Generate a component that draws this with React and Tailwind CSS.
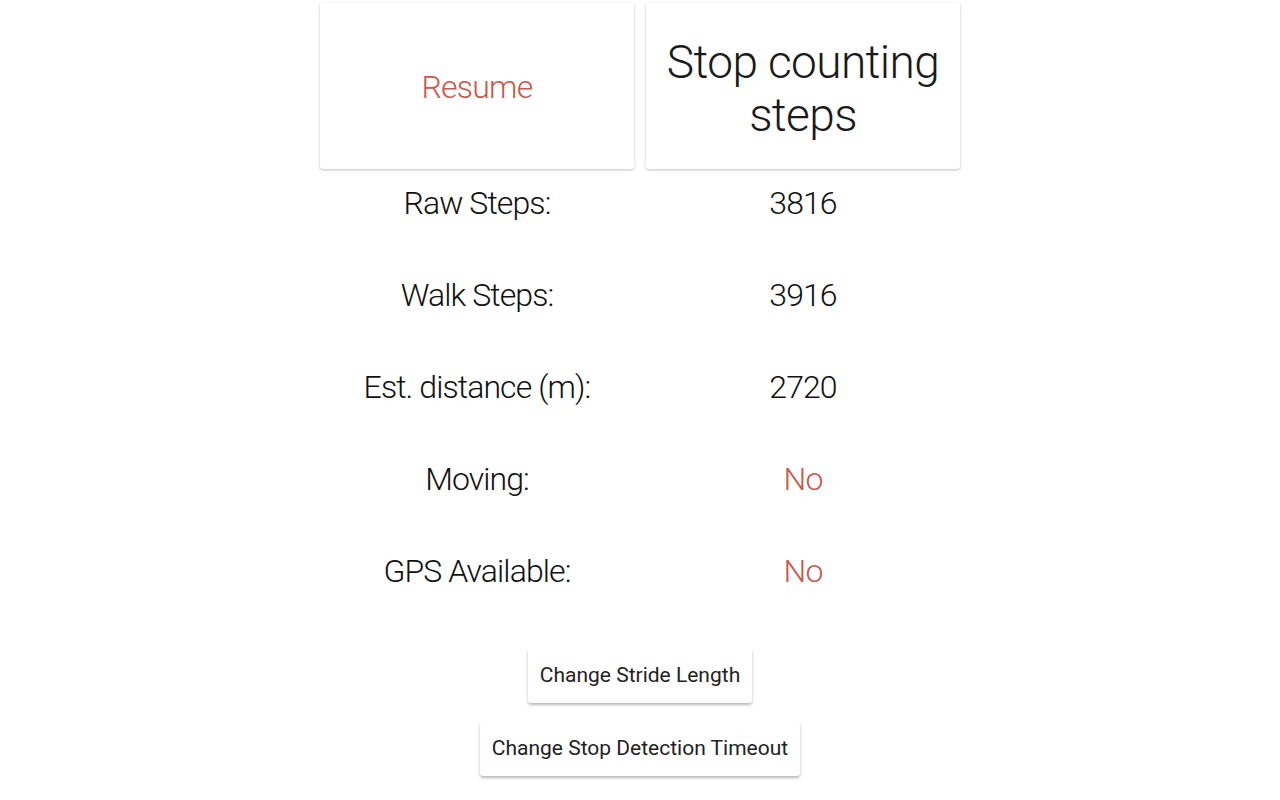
const rows = [
  { label: 'Raw Steps:', value: '3816' },
  { label: 'Walk Steps:', value: '3916' },
  { label: 'Est. distance (m):', value: '2720' },
  { label: 'Moving:', value: 'No', red: true },
  { label: 'GPS Available:', value: 'No', red: true },
]

function Card({ children, className }) {
  return (
    <button className={`h-[166px] bg-white rounded-[3px] shadow-[0_1px_3px_rgba(0,0,0,0.25)] flex items-center justify-center text-center font-light ${className}`}>
      {children}
    </button>
  )
}

function ActionButton({ children }) {
  return (
    <button className="h-[55px] px-3 bg-white rounded-[3px] shadow-[0_2px_3px_rgba(0,0,0,0.28)] text-[21px] text-[#222]">
      {children}
    </button>
  )
}

export default function App() {
  return (
    <div className="min-h-screen bg-white font-['Roboto',sans-serif]">
      <div className="w-[640px] mx-auto pt-[3px]">
        <div className="grid grid-cols-2 gap-3">
          <Card className="pt-[2px] text-[32px] tracking-[-0.8px] text-[#c9584b]">Resume</Card>
          <Card className="pt-[5px] text-[46px] leading-[53px] tracking-[-0.6px] text-[#1a1a1a]">Stop counting steps</Card>
        </div>

        <div className="mt-[14px]">
          {rows.map((row) => (
            <div key={row.label} className="grid grid-cols-2 gap-3 h-[92px] text-[32px] leading-[40px] tracking-[-0.9px] font-light">
              <div className="text-center text-[#111]">{row.label}</div>
              <div className={`text-center ${row.red ? 'text-[#c9584b]' : 'text-[#111]'}`}>{row.value}</div>
            </div>
          ))}
        </div>

        <div className="mt-[5px] flex flex-col items-center gap-[18px]">
          <ActionButton>Change Stride Length</ActionButton>
          <ActionButton>Change Stop Detection Timeout</ActionButton>
        </div>
      </div>
    </div>
  )
}
